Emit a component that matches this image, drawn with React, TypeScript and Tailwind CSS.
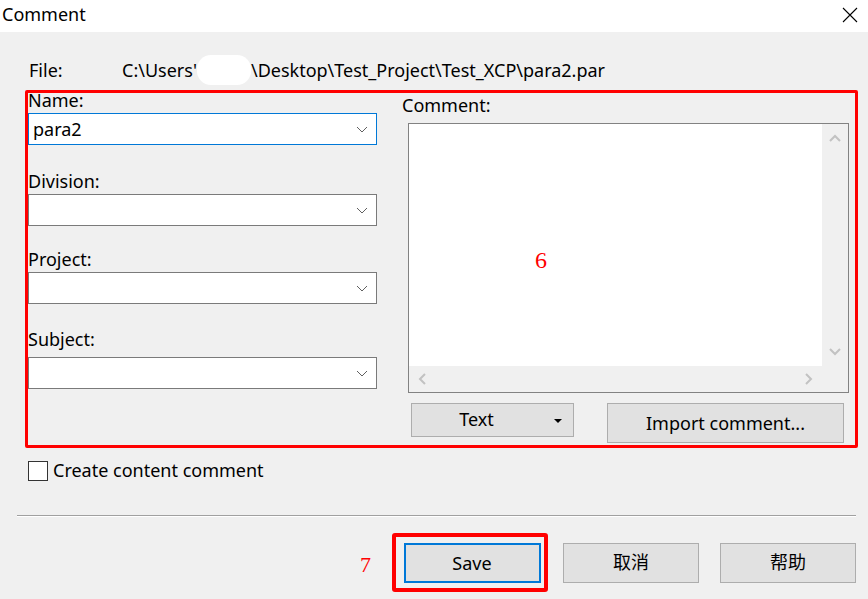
import React from "react";

const font = { fontFamily: '"Noto Sans", "Noto Sans CJK SC", sans-serif' };

function Chevron() {
  return (
    <svg width="12" height="7" viewBox="0 0 12 7" className="block">
      <path d="M1 1 L6 6 L11 1" fill="none" stroke="#606060" strokeWidth="1" />
    </svg>
  );
}

function Combo({ value, focused }: { value?: string; focused?: boolean }) {
  return (
    <div
      className={
        "flex items-center justify-between bg-white h-[32px] w-[349px] pl-[4px] pr-[8px] border " +
        (focused ? "border-[#0078d7]" : "border-[#7a7a7a]")
      }
    >
      <span className="text-[18px] text-black leading-none">{value}</span>
      <Chevron />
    </div>
  );
}

function Label({ children, className }: { children: React.ReactNode; className?: string }) {
  return <div className={"text-[18px] leading-[21px] text-black " + (className || "")}>{children}</div>;
}

export default function App() {
  return (
    <div className="w-[868px] h-[599px] overflow-hidden bg-[#f0f0f0] text-black select-none" style={font}>
      {/* Title bar */}
      <div className="h-[32px] bg-white flex items-center justify-between">
        <span className="pl-[2px] text-[18px] leading-none -mt-[5px]">Comment</span>
        <svg width="16" height="16" viewBox="0 0 16 16" className="mr-[10px] -mt-[2px]">
          <path d="M1 1 L15 15 M15 1 L1 15" stroke="#000" strokeWidth="1.1" />
        </svg>
      </div>

      {/* File row */}
      <div className="flex items-center h-[30px] mt-[23px] pl-[29px] text-[18px]">
        <span className="w-[93px]">File:</span>
        <span>C:\Users'</span>
        <span className="inline-block w-[54px] h-[30px] bg-white rounded-[14px]"></span>
        <span>\Desktop\Test_Project\Test_XCP\para2.par</span>
      </div>

      {/* Red annotated group */}
      <div className="relative ml-[25px] mt-[5px] w-[833px] h-[358px] border-[3px] border-[#ff0000] rounded-[2px] flex">
        {/* Left column */}
        <div className="flex flex-col w-[349px]">
          <Label className="-mt-[3px] mb-[2px]">Name:</Label>
          <Combo value="para2" focused />
          <Label className="mt-[26px] mb-[2px]">Division:</Label>
          <Combo />
          <Label className="mt-[23px] mb-[2px]">Project:</Label>
          <Combo />
          <Label className="mt-[25px] mb-[7px]">Subject:</Label>
          <Combo />
        </div>

        {/* Right column */}
        <div className="flex flex-col ml-[25px]">
          <Label className="mt-[2px]">Comment:</Label>
          <div className="ml-[6px] mt-[7px] w-[441px] h-[270px] border border-[#828282] bg-[#f0f0f0] grid grid-cols-[1fr_26px] grid-rows-[1fr_26px]">
            <div className="bg-white pl-[126px] pt-[124px]">
              <span
                className="text-[24px] text-[#ff0000] leading-none"
                style={{ fontFamily: '"Liberation Serif", serif' }}
              >
                6
              </span>
            </div>
            <div className="flex flex-col items-center justify-between py-[10px]">
              <svg width="12" height="8" viewBox="0 0 12 8">
                <path d="M1 7 L6 2 L11 7" fill="none" stroke="#c2c2c2" strokeWidth="2" />
              </svg>
              <svg width="12" height="8" viewBox="0 0 12 8">
                <path d="M1 1 L6 6 L11 1" fill="none" stroke="#c2c2c2" strokeWidth="2" />
              </svg>
            </div>
            <div className="flex items-center justify-between px-[9px]">
              <svg width="8" height="12" viewBox="0 0 8 12">
                <path d="M7 1 L2 6 L7 11" fill="none" stroke="#c2c2c2" strokeWidth="2" />
              </svg>
              <svg width="8" height="12" viewBox="0 0 8 12">
                <path d="M1 1 L6 6 L1 11" fill="none" stroke="#c2c2c2" strokeWidth="2" />
              </svg>
            </div>
            <div></div>
          </div>
          <div className="flex items-start mt-[10px] ml-[9px]">
            <div className="relative w-[163px] h-[34px] bg-[#e1e1e1] border border-[#adadad] flex items-center justify-center text-[18px]">
              <span className="-ml-[32px] -mt-[2px]">Text</span>
              <svg width="10" height="6" viewBox="0 0 10 6" className="absolute right-[10px] top-[14px]">
                <path d="M1 1 L9 1 L5 5 Z" fill="#000" />
              </svg>
            </div>
            <div className="ml-[33px] w-[237px] h-[40px] bg-[#e1e1e1] border border-[#adadad] flex items-center justify-center text-[18px]">
              Import comment...
            </div>
          </div>
        </div>
      </div>

      {/* Checkbox */}
      <div className="flex items-center mt-[13px] pl-[28px]">
        <div className="w-[20px] h-[20px] bg-white border border-[#333333]"></div>
        <span className="ml-[5px] text-[18px] leading-none -mt-[2px]">Create content comment</span>
      </div>

      {/* Separator */}
      <div className="ml-[17px] mt-[34px] w-[839px] h-[2px] border-t border-[#a0a0a0] border-b border-b-white"></div>

      {/* Bottom buttons */}
      <div className="flex items-center mt-[16px]">
        <span
          className="ml-[360px] mt-[4px] text-[22px] text-[#ff0000] leading-none"
          style={{ fontFamily: '"Liberation Serif", serif' }}
        >
          7
        </span>
        <div className="ml-[21px] w-[156px] h-[59px] border-[4px] border-[#ff0000] rounded-[3px] flex items-center justify-center">
          <div className="w-[137px] h-[40px] bg-[#e1e1e1] border-2 border-[#0078d7] flex items-center justify-center text-[18px] mt-[1px] ml-[4px]">
            Save
          </div>
        </div>
        <div className="ml-[15px] w-[136px] h-[40px] bg-[#e1e1e1] border border-[#adadad] flex items-center justify-center text-[18px]">
          取消
        </div>
        <div className="ml-[21px] w-[136px] h-[40px] bg-[#e1e1e1] border border-[#adadad] flex items-center justify-center text-[18px]">
          帮助
        </div>
      </div>
    </div>
  );
}
